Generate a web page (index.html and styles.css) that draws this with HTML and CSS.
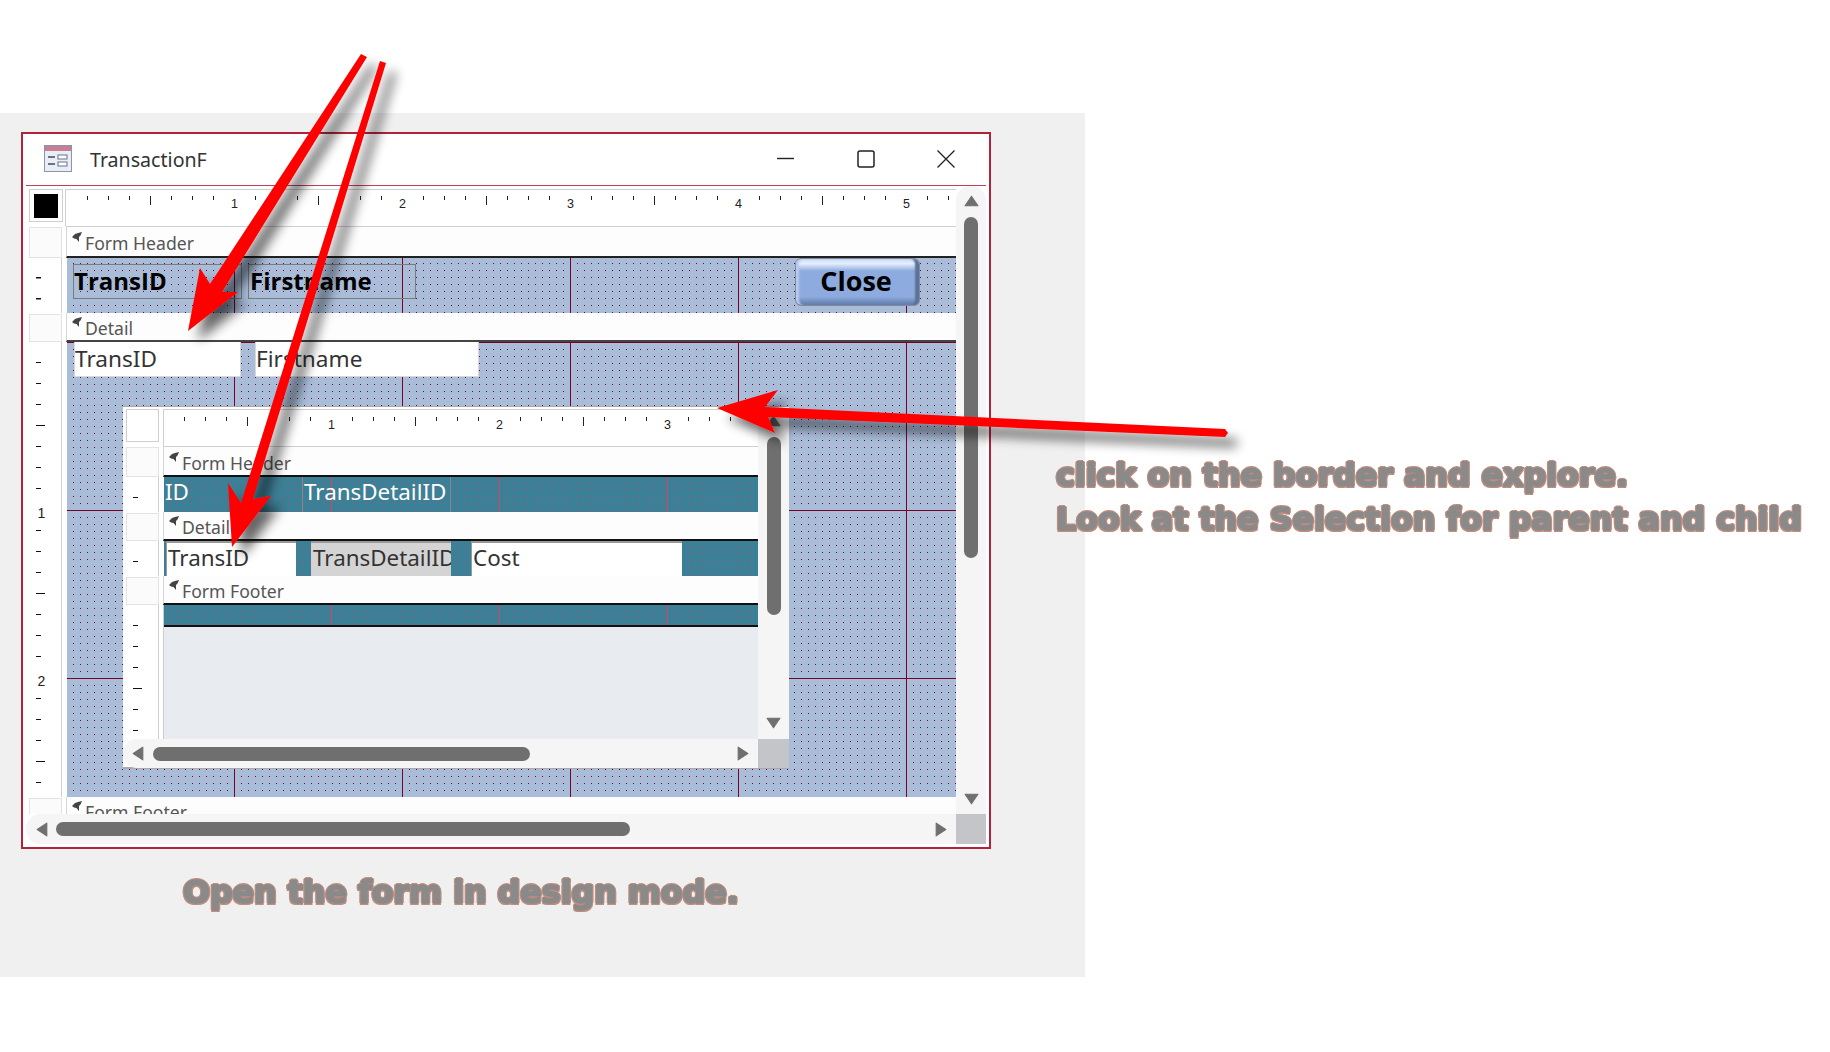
FILE: index.html
```html
<!DOCTYPE html>
<html lang="en">
<head>
<meta charset="utf-8">
<title>TransactionF</title>
<link rel="stylesheet" href="styles.css">
</head>
<body>
<div class="panel">
  <div class="window">
    <div class="titlebar">
      <svg class="app-icon" viewBox="0 0 28 27"><rect x="0.5" y="0.5" width="27" height="26" fill="#e9edf6" stroke="#8d93a8"/><rect x="1" y="1" width="26" height="5" fill="#c77f95"/><path d="M4 12h7M4 19h7" stroke="#6b7288" stroke-width="2"/><rect x="14" y="10" width="9" height="4" fill="#fff" stroke="#6b7288"/><rect x="14" y="17" width="9" height="4" fill="#fff" stroke="#6b7288"/></svg>
      <span class="title">TransactionF</span>
      <svg class="win-btn min" viewBox="0 0 18 18"><path d="M0 8.5h17" stroke="#222" stroke-width="1.4"/></svg>
      <svg class="win-btn max" viewBox="0 0 18 18"><rect x="1" y="1" width="16" height="16" rx="2" fill="none" stroke="#222" stroke-width="1.5"/></svg>
      <svg class="win-btn cls" viewBox="0 0 18 18"><path d="M0.5 0.5l17 17M17.5 0.5l-17 17" stroke="#222" stroke-width="1.3"/></svg>
    </div>
    <div class="design">
      <div class="design-main">
        <div class="row ruler-row">
          <div class="corner"><span class="black"></span></div>
          <div class="ruler">
            <i></i><i></i><i></i><i class="M"></i><i></i><i></i><i></i><i class="n">1</i>
            <i></i><i></i><i></i><i class="M"></i><i></i><i></i><i></i><i class="n">2</i>
            <i></i><i></i><i></i><i class="M"></i><i></i><i></i><i></i><i class="n">3</i>
            <i></i><i></i><i></i><i class="M"></i><i></i><i></i><i></i><i class="n">4</i>
            <i></i><i></i><i></i><i class="M"></i><i></i><i></i><i></i><i class="n">5</i>
            <i></i><i></i>
          </div>
        </div>
        <div class="row head">
          <div class="rail cell"></div>
          <div class="head-label"><svg class="mark" viewBox="0 0 10 10"><path d="M0 5L3 2L6 1L10 0L8.5 3.5L7 5V10L4.5 7L2 6.5Z"/></svg>Form Header</div>
        </div>
        <div class="row band-h">
          <div class="rail vt"><b></b><b></b></div>
          <div class="band blue">
            <span class="lbl lbl1">TransID</span>
            <span class="lbl lbl2">Firstname</span>
            <span class="close-btn">Close</span>
          </div>
        </div>
        <div class="row head detail-head">
          <div class="rail cell"></div>
          <div class="head-label"><svg class="mark" viewBox="0 0 10 10"><path d="M0 5L3 2L6 1L10 0L8.5 3.5L7 5V10L4.5 7L2 6.5Z"/></svg>Detail</div>
        </div>
        <div class="row band-d">
          <div class="rail vt">
            <b></b><b></b><b></b><b class="M"></b><b></b><b></b><b></b><b class="n">1</b>
            <b></b><b></b><b></b><b class="M"></b><b></b><b></b><b></b><b class="n">2</b>
            <b></b><b></b><b></b><b class="M"></b><b></b>
          </div>
          <div class="band blue grid">
            <div class="fields">
              <span class="txt txt1">TransID</span>
              <span class="txt txt2">Firstname</span>
            </div>
            <div class="subform">
              <div class="sub-main">
                <div class="row sub-ruler-row">
                  <div class="corner sub-corner"></div>
                  <div class="ruler sub-ruler">
                    <i></i><i></i><i></i><i class="M"></i><i></i><i></i><i></i><i class="n">1</i>
                    <i></i><i></i><i></i><i class="M"></i><i></i><i></i><i></i><i class="n">2</i>
                    <i></i><i></i><i></i><i class="M"></i><i></i><i></i><i></i><i class="n">3</i>
                    <i></i><i></i><i></i>
                  </div>
                </div>
                <div class="row head sub-head">
                  <div class="rail cell"></div>
                  <div class="head-label"><svg class="mark" viewBox="0 0 10 10"><path d="M0 5L3 2L6 1L10 0L8.5 3.5L7 5V10L4.5 7L2 6.5Z"/></svg>Form Header</div>
                </div>
                <div class="row sub-band">
                  <div class="rail vt"><b></b></div>
                  <div class="band teal">
                    <span class="tl tl1">ID</span>
                    <span class="tl tl2">TransDetailID</span>
                  </div>
                </div>
                <div class="row head sub-head sub-detail">
                  <div class="rail cell"></div>
                  <div class="head-label"><svg class="mark" viewBox="0 0 10 10"><path d="M0 5L3 2L6 1L10 0L8.5 3.5L7 5V10L4.5 7L2 6.5Z"/></svg>Detail</div>
                </div>
                <div class="row sub-band">
                  <div class="rail vt"><b></b></div>
                  <div class="band teal sub-fields">
                    <span class="st st1">TransID</span>
                    <span class="st st2">TransDetailID</span>
                    <span class="st st3">Cost</span>
                  </div>
                </div>
                <div class="row head sub-head sub-detail">
                  <div class="rail cell"></div>
                  <div class="head-label"><svg class="mark" viewBox="0 0 10 10"><path d="M0 5L3 2L6 1L10 0L8.5 3.5L7 5V10L4.5 7L2 6.5Z"/></svg>Form Footer</div>
                </div>
                <div class="row sub-foot">
                  <div class="rail vt"><b></b><b></b><b></b><b class="M"></b><b></b><b></b></div>
                  <div class="foot-col">
                    <div class="teal foot-band"></div>
                  </div>
                </div>
              </div>
              <div class="vscroll sub-v">
                <svg class="arrow" viewBox="0 0 14 11"><path d="M7 1L13 10H1Z"/></svg>
                <span class="vthumb"></span>
                <svg class="arrow down" viewBox="0 0 14 11"><path d="M7 10L13 1H1Z"/></svg>
              </div>
              <div class="hscroll sub-h">
                <svg class="arrow-h" viewBox="0 0 11 14"><path d="M1 7L10 1V13Z"/></svg>
                <span class="hthumb"></span>
                <svg class="arrow-h right" viewBox="0 0 11 14"><path d="M10 7L1 1V13Z"/></svg>
              </div>
              <div class="sc-corner"></div>
            </div>
          </div>
        </div>
        <div class="row head foot-head">
          <div class="rail cell"></div>
          <div class="head-label"><svg class="mark" viewBox="0 0 10 10"><path d="M0 5L3 2L6 1L10 0L8.5 3.5L7 5V10L4.5 7L2 6.5Z"/></svg>Form Footer</div>
        </div>
      </div>
      <div class="vscroll main-v">
        <svg class="arrow" viewBox="0 0 14 11"><path d="M7 1L13 10H1Z"/></svg>
        <span class="vthumb"></span>
        <svg class="arrow down" viewBox="0 0 14 11"><path d="M7 10L13 1H1Z"/></svg>
      </div>
      <div class="hscroll main-h">
        <svg class="arrow-h" viewBox="0 0 11 14"><path d="M1 7L10 1V13Z"/></svg>
        <span class="hthumb"></span>
        <svg class="arrow-h right" viewBox="0 0 11 14"><path d="M10 7L1 1V13Z"/></svg>
      </div>
      <div class="sc-corner"></div>
    </div>
  </div>
  <p class="caption cap-open">Open the form in design mode.</p>
</div>
<div class="notes">
  <p class="caption">click on the border and explore.</p>
  <p class="caption">Look at the Selection for parent and child</p>
</div>
<svg class="arrows" viewBox="0 0 1830 1052" width="1830" height="1052">
  <defs>
    <filter id="sh" x="-20%" y="-20%" width="140%" height="140%">
      <feGaussianBlur in="SourceAlpha" stdDeviation="6"/>
      <feOffset dx="10" dy="10"/>
      <feComponentTransfer><feFuncA type="linear" slope="0.6"/></feComponentTransfer>
      <feMerge><feMergeNode/><feMergeNode in="SourceGraphic"/></feMerge>
    </filter>
  </defs>
  <g fill="#ff0000" filter="url(#sh)">
    <path d="M361 54L367 57L222 292L238 292L188 331L200 268L210 284Z"/>
    <path d="M380 61L386 63L253 499L271 496L232 547L228 483L241 503Z"/>
    <path d="M1225 429L1228 433L1225 437L768 417L775 433L717 408L778 390L765 407Z"/>
  </g>
</svg>
</body>
</html>
```
FILE: styles.css
```css
* { box-sizing: border-box; }
html, body { margin: 0; padding: 0; background: #fff; }
body { width: 1830px; height: 1052px; overflow: hidden; font-family: "Noto Sans", "Open Sans", sans-serif; }

.panel { margin-top: 113px; width: 1085px; height: 864px; background: #f0f0f0; padding: 19px 0 0 21px; }
.window { width: 970px; height: 717px; background: #fff; border: 2px solid #b0233a; padding: 0 3px 3px 3px; display: flex; flex-direction: column; }
.titlebar { height: 52px; flex: none; border-bottom: 1px solid #c0405a; display: flex; align-items: center; padding: 0 31px 3px 18px; }
.app-icon { width: 28px; height: 27px; flex: none; }
.title { font-size: 19.6px; color: #333; margin: 3px 0 0 18px; }
.win-btn { flex: none; width: 18px; height: 18px; margin-top: 1px; }
.min { margin-left: auto; }
.max { margin-left: 62px; }
.cls { margin-left: 62px; }

.design { flex: 1; display: grid; grid-template-columns: 930px 30px; grid-template-rows: 628px 30px; min-height: 0; }
.design-main { overflow: hidden; background: #fff; }
.row { display: flex; flex: none; }

.ruler-row { height: 40px; padding: 3px 0 0 3px; }
.corner { width: 34px; height: 33px; border: 1px solid #cfcfcf; flex: none; display: flex; align-items: center; justify-content: center; }
.black { width: 24px; height: 24px; background: #000; }
.ruler { flex: 1; display: flex; align-items: flex-start; margin-left: 2px; padding: 6px 0 0 1px; border-top: 1px solid #cfcfcf; border-left: 1px solid #cfcfcf; height: 37px; overflow: hidden; }
.ruler i { flex: none; width: 21px; height: 4px; background: linear-gradient(#222, #222) right top / 1px 100% no-repeat; font-style: normal; font-size: 12.5px; font-family: "Liberation Sans", sans-serif; color: #222; }
.ruler i.M { height: 9px; }
.ruler i.n { background: none; width: 24px; margin-right: -3px; height: 16px; line-height: 14px; text-align: right; padding-top: 1px; }

.head { height: 32px; }
.rail { width: 33px; margin-left: 3px; flex: none; background: #fff; border-right: 1px solid #cfcfcf; }
.rail.cell { border: 1px solid #e3e3e3; background: #fbfbfb; margin-top: 1px; }
.head-label { flex: 1; display: flex; align-items: flex-start; margin-left: 4px; padding: 5px 0 0 5px; background: #fdfdfd; color: #555; font-size: 17.6px; line-height: 22px; border-left: 1px solid #d5d5d5; border-bottom: 2px solid #222; border-top: 1px solid #cfcfcf; }
.mark { width: 10px; height: 10px; fill: #444; flex: none; margin-right: 3px; }

.band { flex: 1; margin-left: 5px; position: relative; }
.blue { background-color: #a9bdd9; background-image: linear-gradient(to right, #7a0028 1px, transparent 1px), conic-gradient(from 270deg at 1px 1px, #7a0030 25%, transparent 0); background-size: 168px 100%, 7px 7px; background-position: 167px 0, 6px 5px; }
.blue.grid { background-image: linear-gradient(to right, #7a0028 1px, transparent 1px), linear-gradient(to bottom, #7a0028 1px, transparent 1px), conic-gradient(from 270deg at 1px 1px, #7a0030 25%, transparent 0); background-size: 168px 100%, 100% 168px, 7px 7px; background-position: 167px 0, 0 0, 6px 0; }

.vt { display: flex; flex-direction: column; }
.vt b { flex: none; height: 21px; background: linear-gradient(#111, #111) 7px 20px / 5px 1.5px no-repeat; font-weight: normal; font-size: 14px; font-family: "Liberation Sans", sans-serif; color: #222; text-align: center; }
.vt b.M { background-size: 9px 1.5px; }
.vt b.n { background: none; height: 7px; margin-top: 14px; line-height: 20px; padding-right: 7px; }
.band-h .vt b { background-position: 7px 19px; }

.band-h { height: 55px; }
.band-d { height: 455px; }
.detail-head { height: 29px; }
.detail-head .head-label { border-top: 0; border-bottom-color: #444; padding-top: 4px; }
.foot-head { height: 31px; }
.foot-head .head-label { border-bottom: 0; border-top: 0; padding-top: 4px; }

.band-h .band { display: flex; align-items: flex-start; padding: 6px 0 0 6px; }
.lbl { height: 35px; border: 1px solid #7b7b7b; font-size: 24px; line-height: 32px; font-weight: 700; color: #000; font-family: "Open Sans", sans-serif; padding-left: 0; flex: none; }
.lbl1 { width: 169px; }
.lbl2 { width: 168px; margin-left: 6px; padding-left: 1px; }
.close-btn { width: 125px; height: 48px; flex: none; margin: -6px 0 0 379px; padding-right: 3px; border-radius: 6px; border: 1px solid #7e8aa0; background: linear-gradient(#c9dbf5 0, #e6effc 10%, #8dabdf 26%, #8dabdf 82%, #5f7aa8 100%); box-shadow: inset 4px 0 2px -1px #b9cbed, inset -5px 0 2px -1px #5d7198; font-weight: 700; font-family: "Open Sans", sans-serif; font-size: 27px; line-height: 44px; text-align: center; color: #000; }

.fields { display: flex; padding-left: 7px; }
.txt { height: 35px; background: #fff; border: 1px solid #d9d9d9; border-top: 0; color: #333; font-size: 22.6px; line-height: 34px; padding-left: 0; flex: none; }
.txt1 { width: 167px; }
.txt2 { width: 224px; margin-left: 14px; }

.subform { position: absolute; left: 56px; top: 64px; width: 666px; height: 363px; display: grid; grid-template-columns: 635px 31px; grid-template-rows: 332px 29px; background: #fff; border-bottom: 2px solid #aaa; border-top: 1px solid #aaa; }
.sub-main { overflow: hidden; background: #fff; }
.sub-ruler-row { height: 39px; padding: 2px 0 0 3px; }
.sub-corner { width: 33px; height: 33px; }
.sub-ruler { margin-left: 4px; height: 37px; padding-left: 0; padding-top: 7px; }
.sub-head { height: 31px; }
.sub-head .head-label { border-bottom-color: #111; }
.sub-band { height: 35px; }
.sub-detail { height: 29px; }
.sub-detail .head-label { border-top: 0; padding-top: 4px; }
.teal { background-color: #3b8096; background-image: linear-gradient(to right, #e0405a 1px, transparent 1px), conic-gradient(from 270deg at 1px 1px, #d8406a 25%, transparent 0); background-size: 168px 100%, 7px 7px; background-position: 167px 0, 6px 5px; }
.sub-band .band { display: flex; color: #fff; font-size: 22.4px; line-height: 30px; }
.tl { flex: none; height: 35px; }
.tl1 { width: 139px; padding-left: 1px; border-right: 1px solid #888; }
.tl2 { width: 148px; padding-left: 1px; border-right: 1px solid #888; }
.sub-band .sub-fields { color: #333; }
.st { flex: none; height: 35px; background: #fff; padding-left: 1px; overflow: hidden; white-space: nowrap; border-top: 2px solid #999; }
.st1 { width: 130px; margin-left: 2px; border-left: 1px solid #999; }
.st2 { width: 140px; margin-left: 15px; background: #d4d4d4; padding-left: 2px; }
.st3 { width: 211px; margin-left: 20px; border-left: 1px solid #999; }
.sub-foot { height: 134px; }
.foot-col { flex: 1; display: flex; flex-direction: column; background: #e8ebf0; margin-left: 4px; border-left: 1px solid #ccc; }
.foot-band { flex: none; height: 22px; border-bottom: 2px solid #111; }

.vscroll { background: #f5f5f5; border-radius: 14px 14px 0 0; display: flex; flex-direction: column; align-items: center; }
.arrow { width: 15px; height: 12px; fill: #6f6f6f; stroke: #6f6f6f; stroke-linejoin: round; flex: none; }
.arrow.down { margin-top: auto; }
.vthumb { width: 14px; background: #6f6f6f; border-radius: 7px; flex: none; margin-top: 10px; }
.main-v { padding: 9px 0; }
.main-v .vthumb { height: 341px; }
.sub-v { padding: 8px 0 10px; }
.sub-v .vthumb { height: 178px; }
.hscroll { background: #f5f5f5; display: flex; align-items: center; border-radius: 14px 0 0 14px; }
.arrow-h { width: 12px; height: 15px; fill: #6f6f6f; stroke: #6f6f6f; stroke-linejoin: round; flex: none; }
.arrow-h.right { margin-left: auto; }
.hthumb { height: 14px; background: #6f6f6f; border-radius: 7px; flex: none; }
.main-h { padding: 0 9px 0 10px; }
.main-h .hthumb { width: 574px; margin-left: 8px; }
.sub-h { padding: 0 9px; }
.sub-h .hthumb { width: 377px; margin-left: 9px; }
.sc-corner { background: #c3c5c9; }

.caption { margin: 0; font-family: "DejaVu Sans", sans-serif; font-weight: 700; font-size: 31.7px; line-height: 44px; color: #8a8a8a; -webkit-text-stroke: 1.6px #8a8a8a; text-shadow: 2px 0 #c08d7e, -2px 0 #c08d7e, 0 2px #c08d7e, 0 -2px #c08d7e, 1.5px 1.5px #c08d7e, -1.5px -1.5px #c08d7e, 1.5px -1.5px #c08d7e, -1.5px 1.5px #c08d7e; filter: blur(.5px); white-space: nowrap; }
.cap-open { margin: 21px 0 0 162px; }
.notes { position: absolute; left: 1056px; top: 453px; }
.arrows { position: absolute; left: 0; top: 0; pointer-events: none; }
```
